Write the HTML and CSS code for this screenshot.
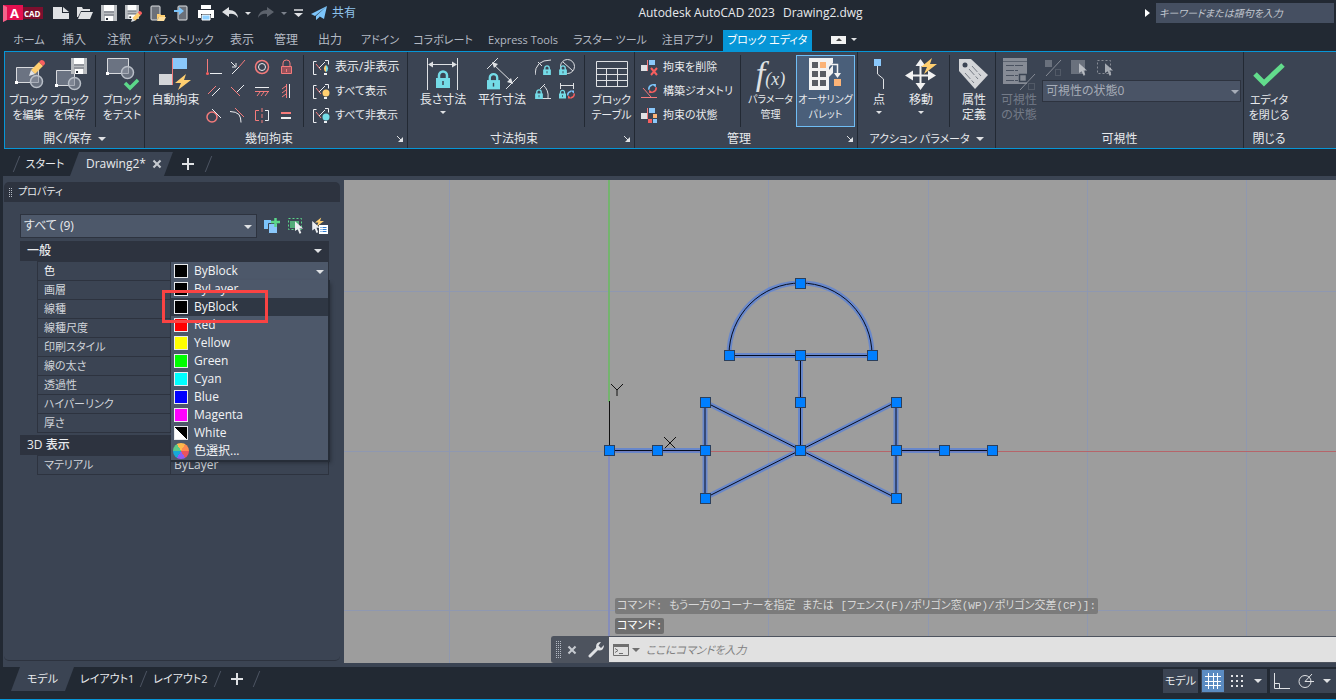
FILE: index.html
```html
<!DOCTYPE html>
<html lang="ja">
<head>
    <meta charset="UTF-8">
    <meta name="viewport" content="width=device-width, initial-scale=1.0">
    <title>Autodesk AutoCAD 2023 - Drawing2.dwg</title>
    <link rel="stylesheet" href="styles.css">
</head>
<body>
    <!-- shared icon shapes -->
    <svg class="defs" aria-hidden="true">
        <symbol id="floppy" viewBox="0 0 16 16">
            <path d="M0 0h16v16H0z" fill="#b9bcc0"/>
            <path d="M3 0h10v6H3zM4 11h8v5H4z" fill="#fff"/>
            <path d="M3 7h10M3 10h10" stroke="#6a6f78"/>
            <path d="M5 13h2v2H5z" fill="#222933"/>
        </symbol>
        <symbol id="pencil" viewBox="0 0 16 16">
            <path d="M2 10l8-8 4 4-8 8z" fill="#ffcf70"/>
            <path d="M10 2l2-2q4 0 4 4l-2 2z" fill="#f75f5f"/>
            <path d="M2 10l-2 6 6-2z" fill="#e1e3e6"/>
        </symbol>
        <symbol id="lock" viewBox="0 0 14 18">
            <path d="M3 9V5.5a4 4 0 0 1 8 0V9" fill="none" stroke="#74dbe7" stroke-width="2.5"/>
            <path d="M0 8h14v10H0z" fill="#74dbe7"/>
            <path d="M7 11v4" stroke="#3b4453" stroke-width="1.5"/>
        </symbol>
        <symbol id="bolt" viewBox="0 0 16 16">
            <path d="M11 0L0 9h6l-3 7L16 6H9z" fill="#ffcf70"/>
        </symbol>
        <symbol id="cursor" viewBox="0 0 10 14">
            <path d="M0 0v11l3-2 2 5 2-1-2-5h4z" fill="#eceef1"/>
        </symbol>
        <symbol id="bracket" viewBox="0 0 17 17">
            <path d="M3.5 2.5h-3v13h3M12 1.5h3.5v4" fill="none" stroke="#eceef1"/>
            <path d="M3 5l5 6" fill="none" stroke="#f47b7b"/>
            <path d="M6 9l6-6" fill="none" stroke="#eceef1"/>
        </symbol>
        <symbol id="swap" viewBox="0 0 8 8">
            <path d="M1 5a3 3 0 0 1 3-4" fill="none" stroke="#7cc4fa" stroke-width="1.5"/>
            <path d="M3 0h4v3z" fill="#7cc4fa"/>
            <path d="M7 3a3 3 0 0 1-3 4" fill="none" stroke="#f75f5f" stroke-width="1.5"/>
            <path d="M5 8H1V5z" fill="#f75f5f"/>
        </symbol>
    </svg>

    <header class="titlebar">
        <div class="quick">
            <button class="logo" aria-label="アプリケーション メニュー">
                <svg width="40" height="18" viewBox="0 0 40 18"><path d="M0 1h20v15H3l-3 2z" fill="#e51050"/><path d="M0 1l4 2v13l-4 2z" fill="#f3648b"/><path d="M20 3h20v12H20z" fill="#7d0f2e"/><text class="logo-a" x="7" y="14">A</text><text class="logo-cad" x="21" y="13">CAD</text></svg>
            </button>
            <button aria-label="クイック新規作成"><svg width="16" height="14" viewBox="0 0 16 14"><path d="M0 1h9v6h7v6H0z" fill="#dfe1e4"/><path d="M10 1l6 5h-6z" fill="#dfe1e4"/></svg></button>
            <button aria-label="開く"><svg width="16" height="14" viewBox="0 0 16 14"><path d="M0 1h5l1 2h7v2H4L1 11H0z" fill="#dfe1e4"/><path d="M4 6h12l-3 7H1z" fill="#dfe1e4"/></svg></button>
            <button aria-label="上書き保存"><svg width="16" height="16"><use href="#floppy"/></svg></button>
            <button aria-label="名前を付けて保存"><svg width="17" height="17" viewBox="0 0 17 17"><use href="#floppy" width="14" height="14"/><use href="#pencil" x="6" y="6" width="11" height="11"/></svg></button>
            <button aria-label="Web から開く"><svg width="16" height="16" viewBox="0 0 16 16"><rect x="1" y="1" width="9" height="14" rx="1" fill="#6b7079" stroke="#dfe1e4"/><path d="M7 9h3l1 1h4v2H9l-2 3z" fill="#ffcf70"/><path d="M9 12h7l-2 4H7z" fill="#ffe0a0"/></svg></button>
            <button aria-label="Web に保存"><svg width="16" height="16" viewBox="0 0 16 16"><rect x="4" y="1" width="9" height="14" rx="1" fill="#6b7079" stroke="#dfe1e4"/><path d="M0 5h5V2l5 4-5 4V7H0z" fill="#7cc4fa"/></svg></button>
            <button aria-label="印刷"><svg width="16" height="16" viewBox="0 0 16 16"><path d="M3 0h10v4H3zM0 5h16v8h-3V9H3v4H0z" fill="#fff"/><path d="M4 10h8v5H4z" fill="#8fd0ff" stroke="#fff"/></svg></button>
            <button aria-label="元に戻す"><svg width="16" height="12" viewBox="0 0 16 12"><path d="M0 5l7-5v3q8 0 9 8-3-5-9-4v3z" fill="#dfe1e4"/></svg></button>
            <span class="caret"></span>
            <button aria-label="やり直し"><svg width="16" height="12" viewBox="0 0 16 12"><path d="M16 5L9 0v3q-8 0-9 8 3-5 9-4v3z" fill="#5c626c"/></svg></button>
            <span class="caret dim"></span>
            <button aria-label="クイック アクセスのカスタマイズ"><svg width="9" height="8" viewBox="0 0 9 8"><path d="M0 1h9" stroke="#dfe1e4" stroke-width="1.5"/><path d="M0 4h9L4.5 8z" fill="#dfe1e4"/></svg></button>
            <button class="share"><svg width="16" height="14" viewBox="0 0 16 14"><path d="M16 0L0 8l4 2zM16 0L5 10v4l3-2.5zM16 0L8 10l5 3z" fill="#7cc4fa"/></svg>共有</button>
        </div>
        <h1 class="app-title"><span>Autodesk AutoCAD 2023</span><span>Drawing2.dwg</span></h1>
        <span class="search-arrow"></span>
        <input class="search" type="text" placeholder="キーワードまたは語句を入力" aria-label="検索">
    </header>

    <nav class="ribbon-tabs">
        <button>ホーム</button>
        <button class="kanji">挿入</button>
        <button class="kanji">注釈</button>
        <button>パラメトリック</button>
        <button class="kanji">表示</button>
        <button class="kanji">管理</button>
        <button class="kanji">出力</button>
        <button>アドイン</button>
        <button>コラボレート</button>
        <button>Express Tools</button>
        <button>ラスター ツール</button>
        <button>注目アプリ</button>
        <button class="active">ブロック エディタ</button>
        <button class="minimize" aria-label="リボンを最小化"><span class="min-box"></span><span class="caret"></span></button>
    </nav>

    <section class="ribbon">
        <div class="panel panel-file">
            <div class="panel-body">
                <button class="tool">
                    <svg width="34" height="34" viewBox="0 0 34 34"><path d="M4.5 10.5h22v15h-22z" fill="#6b7382" stroke="#d8dade"/><path d="M3 24h3v3H3z" fill="#fff"/><circle cx="24.500" cy="24.500" r="6" fill="#8a919e" fill-opacity=".6" stroke="#b9bfc8" stroke-width="1.5"/><use href="#pencil" x="17" y="3" width="16" height="16"/></svg>
                    <span>ブロック<br>を編集</span>
                </button>
                <button class="tool">
                    <svg width="34" height="34" viewBox="0 0 34 34"><path d="M3.5 13.5h18v15h-18z" fill="#6b7382" stroke="#d8dade"/><path d="M2 27h3v3H2z" fill="#fff"/><circle cx="21.500" cy="26.500" r="6" fill="#8a919e" fill-opacity=".6" stroke="#b9bfc8" stroke-width="1.5"/><use href="#floppy" x="18" y="1" width="16" height="16"/></svg>
                    <span>ブロック<br>を保存</span>
                </button>
                <i class="sep"></i>
                <button class="tool">
                    <svg width="34" height="34" viewBox="0 0 34 34"><path d="M2.5 1.5h21v15h-21z" fill="#6b7382" stroke="#d8dade"/><path d="M1 15h3v3H1z" fill="#fff"/><circle cx="22.500" cy="15.500" r="6" fill="#8a919e" fill-opacity=".6" stroke="#b9bfc8" stroke-width="1.5"/><path d="M20 26l5 5 8-8" fill="none" stroke="#5cd88a" stroke-width="3.5"/></svg>
                    <span>ブロック<br>をテスト</span>
                </button>
            </div>
            <div class="panel-title"><button>開く/保存<i class="caret"></i></button></div>
        </div>

        <div class="panel panel-geo">
            <div class="panel-body">
                <button class="tool">
                    <svg width="34" height="34" viewBox="0 0 34 34"><path d="M0 17h13v11H0z" fill="#d3d5d8"/><path d="M14 1h14v11H14z" fill="#8ac8fb"/><path d="M13.5 1v27" stroke="#f47b7b"/><use href="#bolt" x="16" y="17" width="16" height="16"/></svg>
                    <span class="kanji">自動拘束</span>
                </button>
                <div class="icon-grid cols-4">
                    <button aria-label="一致"><svg width="16" height="16" viewBox="0 0 16 16"><path d="M1.5 0v13" stroke="#f47b7b"/><circle cx="1.500" cy="14.500" r="1.5" fill="#f75f5f"/><path d="M4 14.5h12" stroke="#eceef1"/></svg></button>
                    <button aria-label="同一直線上"><svg width="16" height="16" viewBox="0 0 16 16"><path d="M2 15L9 8M1 3l4 4M6 4v4H2" fill="none" stroke="#eceef1"/><path d="M9 8l6-7" stroke="#f47b7b"/></svg></button>
                    <button aria-label="同心円"><svg width="16" height="16" viewBox="0 0 16 16"><circle cx="8" cy="8" r="6.5" fill="none" stroke="#f47b7b" stroke-width="1.5"/><circle cx="8" cy="8" r="3.5" fill="none" stroke="#eceef1"/></svg></button>
                    <button aria-label="固定"><svg width="16" height="16" viewBox="0 0 16 16"><path d="M5 7V4q0-3 3.5-3T12 4v3" fill="none" stroke="#f47b7b"/><path d="M3.5 7.5h10v7h-10z" fill="#99505a" stroke="#f47b7b"/><path d="M8.5 10v3" stroke="#f47b7b"/></svg></button>
                    <button aria-label="平行"><svg width="16" height="16" viewBox="0 0 16 16"><path d="M2 11l8-8" stroke="#f47b7b"/><path d="M6 13l8-8" stroke="#eceef1"/></svg></button>
                    <button aria-label="直交"><svg width="16" height="16" viewBox="0 0 16 16"><path d="M1 4l9 9" stroke="#f47b7b"/><path d="M7 9l7-7" stroke="#eceef1"/></svg></button>
                    <button aria-label="水平"><svg width="16" height="16" viewBox="0 0 16 16"><path d="M1 4.5h14" stroke="#eceef1"/><path d="M1 8.5h14M6 9l-3 4M10 9l-3 4M14 9l-3 4" stroke="#f47b7b"/></svg></button>
                    <button aria-label="垂直"><svg width="16" height="16" viewBox="0 0 16 16"><path d="M11.5 1v14" stroke="#eceef1"/><path d="M8.5 1v14M8 3L4 6M8 7l-4 3M8 11l-4 3" stroke="#f47b7b"/></svg></button>
                    <button aria-label="正接"><svg width="16" height="16" viewBox="0 0 16 16"><circle cx="6" cy="10" r="5" fill="none" stroke="#f47b7b" stroke-width="1.5"/><path d="M6 2l9 9" stroke="#eceef1"/></svg></button>
                    <button aria-label="スムーズ"><svg width="16" height="16" viewBox="0 0 16 16"><path d="M0 4.5q6 0 9 3 2 3 2 8" fill="none" stroke="#eceef1"/><path d="M5 1l9 9" stroke="#f47b7b"/></svg></button>
                    <button aria-label="対称"><svg width="16" height="16" viewBox="0 0 16 16"><path d="M5 3.5H1.5v10H5" fill="none" stroke="#f47b7b"/><path d="M11 3.5h3.5v10H11" fill="none" stroke="#eceef1"/><path d="M8 1v15" stroke="#f47b7b" stroke-dasharray="4 2"/></svg></button>
                    <button aria-label="等値"><svg width="16" height="16" viewBox="0 0 16 16"><path d="M3 6h10" stroke="#f47b7b" stroke-width="2"/><path d="M3 11h10" stroke="#eceef1" stroke-width="2"/></svg></button>
                </div>
                <i class="sep"></i>
                <div class="rows">
                    <button class="kanji"><svg width="17" height="17" viewBox="0 0 17 17"><use href="#bracket"/><path d="M13 6a4 4 0 0 0 0 7z" fill="#ffcf70"/><path d="M13 6a4 4 0 0 1 0 7z" fill="#74dbe7"/><path d="M11 14h3v2h-3z" fill="#eceef1"/></svg>表示/非表示</button>
                    <button><svg width="17" height="17" viewBox="0 0 17 17"><use href="#bracket"/><circle cx="13" cy="10" r="3.5" fill="#ffcf70"/><path d="M11 14h3v2h-3z" fill="#eceef1"/></svg>すべて表示</button>
                    <button><svg width="17" height="17" viewBox="0 0 17 17"><use href="#bracket"/><circle cx="13" cy="10" r="3.5" fill="#74dbe7"/><path d="M11 14h3v2h-3z" fill="#eceef1"/></svg>すべて非表示</button>
                </div>
            </div>
            <div class="panel-title"><span>幾何拘束</span><button class="launcher" aria-label="幾何拘束の設定"><svg width="6" height="6" viewBox="0 0 6 6"><path d="M0 0l4 4" stroke="#dfe1e4"/><path d="M6 1v5H1z" fill="#dfe1e4"/></svg></button></div>
        </div>

        <div class="panel panel-dim">
            <div class="panel-body">
                <button class="tool">
                    <svg width="34" height="34" viewBox="0 0 34 34"><path d="M1.5 1v32M31.5 1v32M3 7.5h27" stroke="#dfe1e4"/><path d="M2 7.5l5-3v6zM31 7.5l-5-3v6z" fill="#dfe1e4"/><use href="#lock" x="10" y="13" width="14" height="18"/></svg>
                    <span class="kanji">長さ寸法</span><i class="caret"></i>
                </button>
                <button class="tool">
                    <svg width="34" height="34" viewBox="0 0 34 34"><path d="M2 12L13 1M21 32l12-12M7 6l21 20" stroke="#dfe1e4"/><path d="M7 5l6 2-4 4zM28 27l-6-2 4-4z" fill="#dfe1e4"/><use href="#lock" x="2" y="15" width="13" height="18"/></svg>
                    <span class="kanji">平行寸法</span>
                </button>
                <div class="icon-grid">
                    <button aria-label="半径"><svg width="16" height="16" viewBox="0 0 16 16"><path d="M0 16Q0 1 16 1M3 3l4 4" fill="none" stroke="#dfe1e4"/><use href="#lock" x="8" y="6" width="8" height="10"/></svg></button>
                    <button aria-label="直径"><svg width="16" height="16" viewBox="0 0 16 16"><circle cx="8.500" cy="7.500" r="7" fill="none" stroke="#dfe1e4"/><path d="M4 3l10 9" stroke="#dfe1e4"/><use href="#lock" y="6" width="8" height="10"/></svg></button>
                    <button aria-label="角度"><svg width="16" height="16" viewBox="0 0 16 16"><path d="M7 15.5h9M5 6l5-5M8 2q6 5 5 13" fill="none" stroke="#dfe1e4"/><use href="#lock" y="6" width="8" height="10"/></svg></button>
                    <button aria-label="変換"><svg width="16" height="16" viewBox="0 0 16 16"><path d="M1.5 0v6M14.5 0v6M2 2.5h12" stroke="#dfe1e4"/><use href="#lock" y="6" width="7" height="10"/><use href="#swap" x="8" y="7" width="8" height="9"/></svg></button>
                </div>
                <i class="sep"></i>
                <button class="tool">
                    <svg width="34" height="34" viewBox="0 0 34 34"><path d="M1.5 4.5h31v25h-31zM2 11.5h30M2 17.5h30M2 23.5h30M11.5 12v17M22.5 12v17" fill="none" stroke="#dfe1e4"/></svg>
                    <span>ブロック<br>テーブル</span>
                </button>
            </div>
            <div class="panel-title"><span>寸法拘束</span><button class="launcher" aria-label="寸法拘束の設定"><svg width="6" height="6" viewBox="0 0 6 6"><path d="M0 0l4 4" stroke="#dfe1e4"/><path d="M6 1v5H1z" fill="#dfe1e4"/></svg></button></div>
        </div>

        <div class="panel panel-manage">
            <div class="panel-body">
                <div class="rows">
                    <button><svg width="17" height="17" viewBox="0 0 17 17"><path d="M0 6h6v6H0z" fill="#dfe1e4"/><path d="M8 1h6v5H8z" fill="#8ac8fb"/><path d="M6.5 1v11" stroke="#f47b7b"/><path d="M10 9l6 7M16 9l-6 7" stroke="#f75f5f" stroke-width="2"/></svg>拘束を削除</button>
                    <button><svg width="17" height="17" viewBox="0 0 17 17"><path d="M0 14.5h16M2 5l8 9" stroke="#f47b7b"/><use href="#swap" x="7" y="1" width="9" height="9"/></svg>構築ジオメトリ</button>
                    <button><svg width="17" height="17" viewBox="0 0 17 17"><path d="M0 6h6v6H0z" fill="#dfe1e4"/><path d="M8 1h6v5H8zM12 12h4v4h-4z" fill="#8ac8fb"/><path d="M6.5 1v11" stroke="#f47b7b"/><path d="M12 7h4v4h-4z" fill="#fbb377"/><path d="M7 12h4v4H7z" fill="#f75f5f"/></svg>拘束の状態</button>
                </div>
                <i class="sep"></i>
                <button class="tool"><b class="fx"><i>f</i>(x)</b><span class="long">パラメータ<br>管理</span></button>
                <button class="tool pressed">
                    <svg width="34" height="34" viewBox="0 0 34 34"><path d="M0 1h20v32H0z" fill="#f2f2f2"/><path d="M3 5h6v6H3zM3 14h6v6H3zM11 14h6v6h-6zM3 23h6v6H3zM11 23h6v6h-6z" fill="#585c63"/><path d="M11 5h6v6h-6zM25 22h7v7h-7z" fill="#fbb377"/><path d="M20 1h4v5l-4 4zM24 8v8l-4 4v-7z" fill="#f2f2f2"/><path d="M22 7.5h6.5V17" fill="none" stroke="#f2f2f2" stroke-width="1.5"/><path d="M25 16h7l-3.5 5z" fill="#f2f2f2"/></svg>
                    <span>オーサリング<br>パレット</span>
                </button>
            </div>
            <div class="panel-title"><span>管理</span><button class="launcher" aria-label="管理の設定"><svg width="6" height="6" viewBox="0 0 6 6"><path d="M0 0l4 4" stroke="#dfe1e4"/><path d="M6 1v5H1z" fill="#dfe1e4"/></svg></button></div>
        </div>

        <div class="panel panel-action">
            <div class="panel-body">
                <button class="tool">
                    <svg width="34" height="34" viewBox="0 0 34 34"><path d="M12 2h7v7h-7z" fill="#8ac8fb"/><path d="M15.5 9v8l6 5v10" fill="none" stroke="#dfe1e4"/></svg>
                    <span class="kanji">点</span><i class="caret"></i>
                </button>
                <button class="tool">
                    <svg width="34" height="34" viewBox="0 0 34 34"><path d="M16.5 5v24M5 18.5h24" stroke="#f2f2f2" stroke-width="2"/><path d="M16.5 2l-5 7h10zM16.5 33l-5-7h10zM1 18.5l8-5v10zM32 18.5l-8-5v10z" fill="#f2f2f2"/><use href="#bolt" x="17" y="1" width="16" height="16"/></svg>
                    <span class="kanji">移動</span><i class="caret"></i>
                </button>
                <i class="sep"></i>
                <button class="tool">
                    <svg width="34" height="34" viewBox="0 0 34 34"><path d="M2 2h12l17 16-13 14L2 14z" fill="#d3d5d8"/><circle cx="8" cy="8" r="2.5" fill="#3b4453"/><path d="M8 16l9 10M12 12l9 10M15 9l9 10" stroke="#777c85" stroke-dasharray="8 2"/></svg>
                    <span class="kanji">属性<br>定義</span>
                </button>
            </div>
            <div class="panel-title"><button>アクション パラメータ<i class="caret"></i></button></div>
        </div>

        <div class="panel panel-vis">
            <div class="panel-body">
                <button class="tool" disabled>
                    <svg width="34" height="34" viewBox="0 0 34 34"><path d="M1 1h24v26H1z" fill="#868b95"/><path d="M1 4.5h24" stroke="#5b626e"/><path d="M4 8.5h18M4 13.5h12M4 18.5h12M4 23.5h12" stroke="#4a5260" stroke-dasharray="8 1"/><path d="M17.5 17.5h7v7h-7z" fill="#868b95" stroke="#3b4453" stroke-width="1.5"/><path d="M18 33l15-16" stroke="#868b95"/><path d="M26.5 26.5h6v6h-6z" fill="none" stroke="#6a717d" stroke-dasharray="1 1"/></svg>
                    <span class="kanji">可視性<br>の状態</span>
                </button>
                <div class="vis-side">
                    <div class="vis-icons">
                        <button disabled aria-label="可視性モード"><svg width="18" height="18" viewBox="0 0 18 18"><path d="M1 1h7v7H1z" fill="#6a717d"/><path d="M2 17L17 1" stroke="#868b95"/><path d="M11.5 10.5h5v6h-5z" fill="none" stroke="#6a717d" stroke-dasharray="1 1"/></svg></button>
                        <button disabled aria-label="表示にする"><svg width="18" height="18" viewBox="0 0 18 18"><path d="M1 1h14v14H1z" fill="#6a717d"/><use href="#cursor" x="9" y="4" width="9" height="13" opacity=".6"/></svg></button>
                        <button disabled aria-label="非表示にする"><svg width="18" height="18" viewBox="0 0 18 18"><path d="M1.5 1.5h13v13h-13z" fill="none" stroke="#868b95" stroke-dasharray="2 2"/><use href="#cursor" x="9" y="4" width="9" height="13" opacity=".6"/></svg></button>
                    </div>
                    <div class="select-box vis-select"><select disabled aria-label="可視性の状態"><option>可視性の状態0</option></select></div>
                </div>
            </div>
            <div class="panel-title"><span>可視性</span></div>
        </div>

        <div class="panel panel-close">
            <div class="panel-body">
                <button class="tool">
                    <svg width="34" height="34" viewBox="0 0 34 34"><path d="M3 17l9 9L31 8" fill="none" stroke="#62dc8c" stroke-width="5"/></svg>
                    <span>エディタ<br>を閉じる</span>
                </button>
            </div>
            <div class="panel-title"><span>閉じる</span></div>
        </div>
    </section>

    <nav class="doc-tabs">
        <i class="slash"></i>
        <button>スタート</button>
        <div class="doc-active"><button>Drawing2*</button><button class="x" aria-label="閉じる"></button></div>
        <button class="plus" aria-label="新しい図面"></button>
        <i class="slash"></i>
    </nav>

    <main class="workspace">
        <aside class="palette">
            <h2 class="palette-title"><i class="grip"></i>プロパティ</h2>
            <div class="palette-body">
                <div class="filter">
                    <div class="select-box"><select aria-label="選択オブジェクト"><option>すべて (9)</option></select></div>
                    <button aria-label="PICKADD の切り替え"><svg width="18" height="18" viewBox="0 0 18 18"><path d="M1 3h7v9H1z" fill="#7cc4fa"/><path d="M5.5 6.5h9v10h-9z" fill="#8ac8fb" stroke="#3b4453"/><path d="M8 5h9M12.5 1v9" stroke="#5cd88a" stroke-width="2.5"/></svg></button>
                    <button aria-label="オブジェクトを選択"><svg width="18" height="18" viewBox="0 0 18 18"><path d="M1.5 1.5h13v11h-13z" fill="none" stroke="#5cd88a" stroke-dasharray="2 2"/><path d="M3 4h9v7H3z" fill="#5cd88a" opacity=".7"/><use href="#cursor" x="8" y="4" width="9" height="13"/></svg></button>
                    <button aria-label="クイック選択"><svg width="18" height="18" viewBox="0 0 18 18"><use href="#bolt" x="4" y="0" width="9" height="10"/><use href="#cursor" x="1" y="4" width="9" height="12"/><path d="M8 8h9v9H8z" fill="#fff"/><path d="M9.5 10.5h6M9.5 12.5h6M9.5 14.5h6" stroke="#2e7cd0" stroke-dasharray="1 1 4"/></svg></button>
                </div>
                <h3 class="group">一般<i class="caret"></i></h3>
                <table class="props">
                    <tr class="selected">
                        <th scope="row"><label for="color">色</label></th>
                        <td>
                            <div class="color-field">
                                <i class="swatch black"></i>
                                <div class="select-box"><select id="color"><option>ByBlock</option></select></div>
                                <ul class="color-list">
                                    <li><button><i class="swatch black"></i>ByLayer</button></li>
                                    <li><button class="current"><i class="swatch black"></i>ByBlock</button></li>
                                    <li><button><i class="swatch red"></i>Red</button></li>
                                    <li><button><i class="swatch yellow"></i>Yellow</button></li>
                                    <li><button><i class="swatch green"></i>Green</button></li>
                                    <li><button><i class="swatch cyan"></i>Cyan</button></li>
                                    <li><button><i class="swatch blue"></i>Blue</button></li>
                                    <li><button><i class="swatch magenta"></i>Magenta</button></li>
                                    <li><button><i class="swatch white"></i>White</button></li>
                                    <li><button><i class="swatch wheel"></i>色選択...</button></li>
                                </ul>
                                <div class="callout"></div>
                            </div>
                        </td>
                    </tr>
                    <tr><th scope="row">画層</th><td></td></tr>
                    <tr><th scope="row">線種</th><td></td></tr>
                    <tr><th scope="row">線種尺度</th><td></td></tr>
                    <tr><th scope="row">印刷スタイル</th><td></td></tr>
                    <tr><th scope="row">線の太さ</th><td></td></tr>
                    <tr><th scope="row">透過性</th><td></td></tr>
                    <tr><th scope="row">ハイパーリンク</th><td></td></tr>
                    <tr><th scope="row">厚さ</th><td></td></tr>
                </table>
                <h3 class="group group-3d">3D 表示</h3>
                <table class="props">
                    <tr><th scope="row">マテリアル</th><td>ByLayer</td></tr>
                </table>
            </div>
        </aside>

        <section class="canvas">
            <svg class="drawing" width="100%" height="100%" role="img" aria-label="バルブ ブロックの図面">
                <g class="grid">
                    <path d="M105.5 0v2000M424.5 0v2000M584.5 0v2000M743.5 0v2000M902.5 0v2000M1062.5 0v2000"/>
                    <path d="M0 111.5h4000M0 271.5h265M0 430.5h4000"/>
                    <path class="grid-main" d="M265 271v2000"/>
                </g>
                <path class="axis-y" d="M265 0v222"/>
                <path class="axis-x" d="M265 271.5h4000"/>
                <path class="ucs" d="M265.5 221v49M267 204l6 6 6-6M273 210v6M320 257l12 12M332 257l-12 12"/>
                <g class="glow">
                    <path d="M265 270.5h96M552 270.5h96M361 318v-96L552 318v-96L361 318M456.5 270v-95M385 175.5h143M385 175a71.5 72 0 0 1 143 0"/>
                </g>
                <g class="edge">
                    <path d="M265 270.5h96M552 270.5h96M361 318v-96L552 318v-96L361 318M456.5 270v-95M385 175.5h143M385 175a71.5 72 0 0 1 143 0"/>
                </g>
                <g class="grips">
                    <rect x="260.500" y="265.500" width="10" height="10"/>
                    <rect x="308.500" y="265.500" width="10" height="10"/>
                    <rect x="356.500" y="265.500" width="10" height="10"/>
                    <rect x="356.500" y="217.500" width="10" height="10"/>
                    <rect x="356.500" y="313.500" width="10" height="10"/>
                    <rect x="451.500" y="265.500" width="10" height="10"/>
                    <rect x="451.500" y="217.500" width="10" height="10"/>
                    <rect x="451.500" y="170.500" width="10" height="10"/>
                    <rect x="380.500" y="170.500" width="10" height="10"/>
                    <rect x="523.500" y="170.500" width="10" height="10"/>
                    <rect x="451.500" y="98.500" width="10" height="10"/>
                    <rect x="547.500" y="217.500" width="10" height="10"/>
                    <rect x="547.500" y="265.500" width="10" height="10"/>
                    <rect x="547.500" y="313.500" width="10" height="10"/>
                    <rect x="595.500" y="265.500" width="10" height="10"/>
                    <rect x="643.500" y="265.500" width="10" height="10"/>
                </g>
            </svg>
            <div class="command">
                <div class="history">
                    <p>コマンド: もう一方のコーナーを指定 または [フェンス(F)/ポリゴン窓(WP)/ポリゴン交差(CP)]:</p>
                    <p class="latest">コマンド:</p>
                </div>
                <div class="command-bar">
                    <div class="command-tools">
                        <i class="grip"></i>
                        <button class="x" aria-label="コマンド ラインを閉じる"></button>
                        <button aria-label="カスタマイズ"><svg width="16" height="16" viewBox="0 0 16 16"><path d="M2 14l7-7" stroke="#dfe1e4" stroke-width="3" stroke-linecap="round"/><path d="M13 0q-5 0-5 5 0 3 3 3.5 5 0 5-5.5l-3 3-2.5-2.5z" fill="#dfe1e4"/></svg></button>
                    </div>
                    <div class="prompt">
                        <button aria-label="最近使ったコマンド"><svg width="16" height="12" viewBox="0 0 16 12"><path d="M.5.5h15v11H.5z" fill="none" stroke="#6f6f6f"/><path d="M0 0h16v3H0z" fill="#6f6f6f"/><path d="M2 4.5l3 2-3 2M6 9.5h4" fill="none" stroke="#6f6f6f"/></svg><i class="caret"></i></button>
                        <input type="text" placeholder="ここにコマンドを入力" aria-label="コマンド">
                    </div>
                </div>
            </div>
        </section>
    </main>

    <footer class="statusbar">
        <nav class="layouts">
            <button class="active">モデル</button>
            <button>レイアウト1</button>
            <i class="slash"></i>
            <button>レイアウト2</button>
            <i class="slash"></i>
            <button class="plus" aria-label="新しいレイアウト"></button>
            <i class="slash"></i>
        </nav>
        <div class="status-group"><button class="model">モデル</button></div>
        <div class="status-group">
            <button class="on" aria-label="グリッド"><svg width="16" height="16" viewBox="0 0 16 16"><path d="M3.5 0v16M8.5 0v16M12.5 0v16M0 3.5h16M0 8.5h16M0 12.5h16" stroke="#fff"/></svg></button>
            <button aria-label="スナップ"><svg width="14" height="14" viewBox="0 0 14 14"><path d="M1 2h12M1 7h12M1 12h12" stroke="#dfe1e4" stroke-width="2" stroke-dasharray="2 3"/></svg></button>
            <button class="drop" aria-label="スナップ設定"><i class="caret"></i></button>
        </div>
        <div class="status-group">
            <button aria-label="直交モード"><svg width="16" height="16" viewBox="0 0 16 16"><path d="M.5 0v15.5H16M.5 10.5h5v5" fill="none" stroke="#dfe1e4"/></svg></button>
            <button aria-label="極トラッキング"><svg width="16" height="16" viewBox="0 0 16 16"><circle cx="7" cy="8.500" r="6" fill="none" stroke="#dfe1e4"/><path d="M7 8.5h9M7 8.5L14 1" stroke="#dfe1e4"/></svg></button>
            <button class="drop" aria-label="極トラッキング設定"><i class="caret"></i></button>
        </div>
    </footer>
</body>
</html>
```
FILE: styles.css
```css
* {
    box-sizing: border-box;
}

body {
    display: flex;
    flex-direction: column;
    height: 100vh;
    margin: 0;
    overflow: hidden;
    background: #222933;
    color: #e8eaed;
    font-family: "Open Sans", "Noto Sans CJK JP", sans-serif;
    font-size: 12px;
    line-height: 16px;
    font-feature-settings: "palt";
}

button, input, select {
    margin: 0;
    padding: 0;
    border: 0;
    background: none;
    color: inherit;
    font: inherit;
    font-feature-settings: inherit;
}

h1, h2, h3, p, ul {
    margin: 0;
    padding: 0;
    font-size: 12px;
    font-weight: normal;
    list-style: none;
}

svg {
    display: block;
    flex: none;
}

.defs {
    position: absolute;
    width: 0;
    height: 0;
}

.caret {
    flex: none;
    display: inline-block;
    border: 4px solid transparent;
    border-top-color: #dfe1e4;
    border-bottom: 0;
}

.caret.dim {
    border-top-color: #7c828c;
}

/* title bar */
.titlebar {
    display: flex;
    align-items: center;
    height: 26px;
    flex: none;
    padding: 0 2px 0 3px;
}

.quick {
    display: flex;
    align-items: center;
    gap: 8px;
}

.quick .caret {
    margin-left: -1px;
    margin-right: -1px;
    border-width: 3px;
    border-bottom: 0;
}

.logo {
    margin-right: 2px;
}

.logo-a {
    fill: #fff;
    font: bold 13px "Open Sans", sans-serif;
}

.logo-cad {
    fill: #fff;
    font: bold 8px "Open Sans", sans-serif;
}

.share {
    display: flex;
    align-items: center;
    gap: 5px;
    color: #8fc4ee;
}

.app-title {
    flex: 1;
    display: flex;
    justify-content: center;
    gap: 8px;
    white-space: nowrap;
}

.search-arrow {
    border: 4px solid transparent;
    border-left: 5px solid #fff;
    border-right: 0;
    margin-right: 6px;
}

.search {
    width: 178px;
    height: 20px;
    padding: 0 3px;
    background: #454f61;
    font-size: 10px;
    font-style: italic;
}

.search::placeholder {
    color: #c3c8d0;
}

/* ribbon tabs */
.ribbon-tabs {
    display: grid;
    grid-template-columns: 46px 44px 46px 78px 44px 44px 44px 56px 70px 90px 84px 71px 89px 64px;
    flex: none;
    height: 25px;
    padding: 4px 0 0 6px;
    color: #b4bac4;
    font-size: 11px;
    white-space: nowrap;
}

.ribbon-tabs button {
    padding-bottom: 2px;
}

.ribbon-tabs .kanji {
    font-size: 12px;
}

.ribbon-tabs .active {
    background: #0696d7;
    color: #fff;
}

.minimize {
    display: flex;
    align-items: center;
    justify-content: center;
    gap: 5px;
}

.minimize .caret {
    border-width: 3px;
    border-bottom: 0;
}

.min-box {
    display: flex;
    align-items: center;
    justify-content: center;
    width: 15px;
    height: 8px;
    background: #f2f2f2;
}

.min-box::after {
    content: "";
    border: 3px solid transparent;
    border-bottom-color: #444;
    border-top: 0;
}

/* ribbon */
.ribbon {
    display: flex;
    flex: none;
    height: 98px;
    margin-left: 4px;
    border: 1px solid #0696d7;
    border-right: 0;
    background: #3b4453;
}

.panel {
    display: flex;
    flex-direction: column;
    flex: none;
    border-right: 1px solid #222933;
}

.panel-body {
    display: grid;
    height: 76px;
    padding: 3px 0 1px;
}

.panel-file {
    width: 140px;
}

.panel-file .panel-body {
    grid-template-columns: 41px 41px 10px 44px;
    padding-left: 3px;
}

.panel-geo {
    width: 263px;
}

.panel-geo .panel-body {
    grid-template-columns: 53px 96px 10px 1fr;
    padding-left: 4px;
}

.panel-dim {
    width: 227px;
}

.panel-dim .panel-body {
    grid-template-columns: 60px 58px 48px 10px 1fr;
    padding-left: 5px;
}

.panel-manage {
    width: 223px;
}

.panel-manage .panel-body {
    grid-template-columns: 94px 10px 51px 59px;
    padding-left: 6px;
}

.panel-action {
    width: 138px;
}

.panel-action .panel-body {
    grid-template-columns: 42px 42px 14px 36px;
}

.panel-vis {
    width: 248px;
}

.panel-vis .panel-body {
    grid-template-columns: 42px 1fr;
    gap: 2px;
    padding-left: 2px;
    padding-right: 2px;
}

.panel-close {
    flex: 1;
    border-right: 0;
}

.panel-close .panel-body {
    grid-template-columns: 50px;
}

.panel-close .panel-title {
    width: 50px;
}

.panel-title {
    display: flex;
    align-items: center;
    justify-content: center;
    height: 20px;
    padding-top: 2px;
    white-space: nowrap;
}

.panel-title span {
    flex: 1;
    text-align: center;
}

.panel-title .caret {
    margin: 0 0 2px 6px;
}

.panel-action .panel-title {
    font-size: 11px;
}

.launcher {
    display: grid;
    place-items: center;
    width: 14px;
    height: 8px;
}

.tool {
    display: flex;
    flex-direction: column;
    align-items: center;
    justify-content: flex-start;
    padding-top: 2px;
    font-size: 11px;
    line-height: 15px;
    white-space: nowrap;
}

.tool span {
    margin-top: 1px;
}

.tool .kanji,
.rows .kanji {
    font-size: 12px;
}

.tool .long {
    font-size: 10px;
}

.tool .caret {
    margin-top: 4px;
    border-width: 3px;
    border-bottom: 0;
}

.tool:disabled {
    color: #747b88;
}

.tool.pressed {
    padding-top: 1px;
    border: 1px solid #6fbdf5;
    background: #4a5f7a;
    font-size: 10px;
}

.fx {
    height: 34px;
    color: #dfe1e4;
    font: italic 18px/34px "Liberation Serif", serif;
}

.fx i {
    font-size: 34px;
}

.sep {
    justify-self: center;
    width: 1px;
    background: #222933;
}

.icon-grid {
    display: grid;
    grid-template-columns: repeat(2, 24px);
    grid-auto-rows: 24px;
}

.icon-grid.cols-4 {
    grid-template-columns: repeat(4, 24px);
}

.icon-grid button {
    display: grid;
    place-items: center;
}

.rows {
    display: grid;
    grid-template-rows: repeat(3, 24px);
}

.panel-geo .rows {
    padding-left: 5px;
}

.rows button {
    display: flex;
    align-items: center;
    gap: 5px;
    white-space: nowrap;
    font-size: 11px;
}

.vis-icons {
    display: flex;
    gap: 8px;
    height: 25px;
    padding: 3px 2px;
}

.select-box {
    position: relative;
    flex: 1;
    min-width: 0;
}

.select-box select {
    appearance: none;
    width: 100%;
    height: 100%;
    padding: 0 16px 0 3px;
    opacity: 1;
}

.select-box::after {
    content: "";
    position: absolute;
    right: 4px;
    top: 50%;
    margin-top: -1px;
    border: 4px solid transparent;
    border-top-color: #dfe1e4;
    border-bottom: 0;
    pointer-events: none;
}

.vis-select {
    height: 22px;
    border: 1px solid #2d333f;
    background: #4a5466;
    color: #a7adb8;
}

.vis-select::after {
    right: 1px;
    border-top-color: #a7adb8;
}

/* drawing tabs */
.doc-tabs {
    display: flex;
    align-items: center;
    flex: none;
    height: 24px;
    margin-top: 3px;
    padding-left: 13px;
}

.slash {
    width: 1px;
    height: 16px;
    margin: 0 3px;
    background: #4d5563;
    transform: skewX(-22deg);
}

.doc-tabs > button {
    width: 50px;
    font-size: 11px;
}

.doc-active {
    display: flex;
    align-items: center;
    gap: 6px;
    height: 24px;
    padding: 0 11px 0 16px;
    background: #3b4453;
    clip-path: polygon(9px 0, 100% 0, calc(100% - 9px) 100%, 0 100%);
}

.x {
    position: relative;
    width: 10px;
    height: 10px;
}

.x::before,
.x::after {
    content: "";
    position: absolute;
    left: 0;
    top: 4px;
    width: 10px;
    height: 2px;
    background: #c6cad0;
    transform: rotate(45deg);
}

.x::after {
    transform: rotate(-45deg);
}

.plus {
    width: 12px;
    height: 12px;
    background:
        linear-gradient(#dfe1e4, #dfe1e4) center / 12px 2px no-repeat,
        linear-gradient(#dfe1e4, #dfe1e4) center / 2px 12px no-repeat;
}

.doc-tabs > .plus {
    width: 12px;
    margin: 0 11px 0 9px;
}

/* workspace */
.workspace {
    display: flex;
    flex: 1;
    min-height: 0;
    margin-left: 3px;
    padding-bottom: 4px;
    background: #3b4453;
}

.palette {
    flex: none;
    width: 341px;
    padding: 6px 4px 2px 1px;
}

.palette-title {
    display: flex;
    align-items: center;
    gap: 6px;
    height: 20px;
    padding: 0 4px 3px;
    border-radius: 5px 5px 0 0;
    background: #2d333f;
    font-size: 10px;
}

.grip {
    width: 4px;
    height: 9px;
    background: repeating-conic-gradient(#b4bac4 0 25%, transparent 0 100%) 0 0 / 2px 2px;
}

.palette-title .grip {
    margin-top: 4px;
}

.palette-body {
    height: calc(100% - 20px);
    padding: 12px 11px 0 16px;
    border-bottom: 1px solid #2d333f;
    border-radius: 0 0 5px 5px;
}

.filter {
    display: flex;
    align-items: center;
    gap: 6px;
    height: 24px;
    margin-bottom: 3px;
}

.filter .select-box {
    height: 24px;
    border: 1px solid #2d333f;
    background: #4d586a;
}

.group {
    display: flex;
    align-items: center;
    justify-content: space-between;
    height: 20px;
    padding: 0 7px;
    background: #2d333f;
    font-weight: 500;
}

.group-3d {
    margin-top: 2px;
}

.props {
    width: 292px;
    margin-left: 17px;
    border-collapse: collapse;
    table-layout: fixed;
}

.props th,
.props td {
    height: 19px;
    padding: 0 0 0 6px;
    border: 1px solid #2d333f;
    color: #d0d4da;
    font-weight: normal;
    font-size: 11px;
    line-height: 16px;
    text-align: left;
}

.props th {
    width: 133px;
}

.props td {
    padding-left: 3px;
    font-size: 12px;
}

.props .selected th,
.props .selected td {
    color: #f2f3f5;
}

.props .selected td {
    padding: 0;
    background: #4d586a;
}

.color-field {
    position: relative;
    display: flex;
    align-items: center;
    gap: 3px;
    height: 18px;
    padding-left: 3px;
}

.color-field .select-box {
    height: 18px;
}

.swatch {
    flex: none;
    width: 14px;
    height: 14px;
    border: 1px solid #e8eaed;
}

.black { background: #000; }
.red { background: #f00; }
.yellow { background: #ff0; }
.green { background: #0f0; }
.cyan { background: #0ff; }
.blue { background: #00f; }
.magenta { background: #f0f; }
.white { background: linear-gradient(to top right, #fff 50%, #000 50%); }

.wheel {
    width: 16px;
    height: 16px;
    margin: 0 -1px;
    border: 0;
    border-radius: 50%;
    background: conic-gradient(from -30deg, #ffb84d 60deg, #ff8a50 0 120deg, #e8545f 0 180deg, #8b5cf6 0 240deg, #17a9d8 0 300deg, #5cc98a 0);
}

.color-list {
    position: absolute;
    left: 0;
    top: 18px;
    z-index: 1;
    width: 100%;
    background: #4d586a;
    box-shadow: 1px 1px 0 1px #262d38, 3px 3px 4px rgba(0, 0, 0, 0.3);
}

.color-list button {
    display: flex;
    align-items: center;
    gap: 6px;
    width: 100%;
    height: 18px;
    padding-left: 3px;
    color: #f2f3f5;
}

.color-list .current {
    background: #2f3744;
}

.callout {
    position: absolute;
    left: -9px;
    top: 28px;
    z-index: 2;
    width: 106px;
    height: 33px;
    border: 3px solid #fa4343;
}

/* drawing area */
.canvas {
    position: relative;
    flex: 1;
    min-width: 0;
    margin-top: 4px;
    background: #9d9d9d;
    overflow: hidden;
}

.drawing {
    position: absolute;
    left: 0;
    top: 0;
}

.grid {
    stroke: #8f98b0;
}

.grid-main {
    stroke: #858dba;
    stroke-width: 2;
}

.axis-y {
    stroke: #74b46e;
    stroke-width: 2;
}

.axis-x {
    stroke: #b5656a;
}

.ucs {
    fill: none;
    stroke: #111;
}

.glow {
    fill: none;
    stroke: #5b82d6;
    stroke-width: 5;
    opacity: 0.8;
}

.edge {
    fill: none;
    stroke: #050d22;
}

.grips {
    fill: #007fff;
    stroke: #2b3f5c;
}

.command {
    position: absolute;
    left: 207px;
    right: 0;
    bottom: 0;
}

.history {
    display: flex;
    flex-direction: column;
    align-items: flex-start;
    gap: 4px;
    padding: 0 0 2px 64px;
    font-family: "Liberation Mono", "Noto Sans CJK JP", monospace;
}

.history p {
    padding: 0 2px;
    border-radius: 2px;
    background: #7b7b7b;
    color: #d8d8d8;
    font-size: 11px;
    white-space: nowrap;
}

.history .latest {
    background: #6e6e6e;
    color: #fff;
}

.command-bar {
    display: flex;
    height: 27px;
    border: 1px solid #4d535e;
    border-right: 0;
    border-radius: 3px 0 0 3px;
    background: #4d535e;
}

.command-tools {
    display: flex;
    align-items: center;
    gap: 11px;
    width: 57px;
    padding-left: 3px;
}

.command-tools .grip {
    width: 6px;
    height: 18px;
    margin-right: -5px;
    flex: none;
}

.prompt {
    display: flex;
    align-items: center;
    gap: 6px;
    flex: 1;
    padding-left: 4px;
    background: #e1e1e1;
}

.prompt button {
    display: flex;
    align-items: center;
    gap: 3px;
}

.prompt .caret {
    border-top-color: #6f6f6f;
}

.prompt input {
    flex: 1;
    height: 25px;
    color: #333;
    font-size: 11px;
    font-style: italic;
}

.prompt input::placeholder {
    color: #808080;
}

/* status bar */
.statusbar {
    display: flex;
    align-items: flex-start;
    gap: 3px;
    flex: none;
    height: 33px;
    border-bottom: 1px solid #0696d7;
}

.layouts {
    flex: 1;
    display: flex;
    align-items: center;
    height: 24px;
    padding-left: 11px;
    font-size: 11px;
}

.layouts button {
    padding: 0 6px;
}

.layouts .active {
    width: 63px;
    height: 24px;
    background: #3b4453;
    clip-path: polygon(9px 0, 100% 0, calc(100% - 9px) 100%, 0 100%);
}

.layouts .plus {
    width: 12px;
    padding: 0;
    margin: 0 10px;
}

.status-group {
    display: flex;
    height: 24px;
    margin-top: 2px;
    background: #3b4453;
}

.status-group button {
    display: grid;
    place-items: center;
    width: 24px;
    height: 24px;
}

.status-group .on {
    border: 1px solid #3b4453;
    background: #5b8cc2;
}

.status-group .drop {
    width: 18px;
}

.status-group .model {
    width: 35px;
    font-size: 11px;
}
```
